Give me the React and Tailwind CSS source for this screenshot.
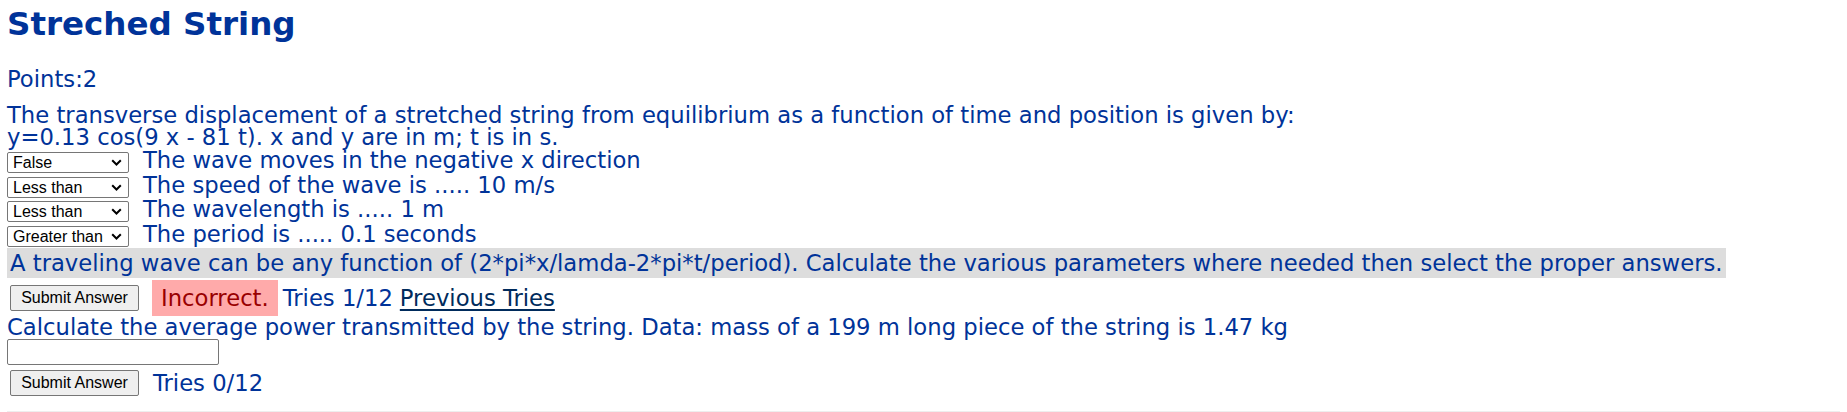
import React from 'react';

const Chevron = () => (
  <svg className="pointer-events-none absolute right-[7px] top-[7px]" width="11" height="7" viewBox="0 0 11 7">
    <path d="M1.2 1.2 L5.5 5.5 L9.8 1.2" fill="none" stroke="#000" strokeWidth="2" />
  </svg>
);

const Dropdown = ({ value, options }) => (
  <div className="relative mt-[4px] h-[21px] w-[122px] shrink-0">
    <select
      defaultValue={value}
      className="block h-full w-full appearance-none rounded-[2px] border border-[#767676] bg-white pl-[5px] font-['Liberation_Sans',sans-serif] text-[16px] leading-[19px] text-black"
    >
      {options.map((o) => (
        <option key={o}>{o}</option>
      ))}
    </select>
    <Chevron />
  </div>
);

const SubmitButton = () => (
  <button className="ml-[3px] block h-[26px] w-[129px] shrink-0 rounded-[2px] border border-[#767676] bg-[#efefef] font-['Liberation_Sans',sans-serif] text-[16px] leading-[24px] text-black">
    Submit Answer
  </button>
);

const rows = [
  { value: 'False', options: ['False', 'True'], text: 'The wave moves in the negative x direction' },
  { value: 'Less than', options: ['Less than', 'Equal to', 'Greater than'], text: 'The speed of the wave is ..... 10 m/s' },
  { value: 'Less than', options: ['Less than', 'Equal to', 'Greater than'], text: 'The wavelength is ..... 1 m' },
  { value: 'Greater than', options: ['Less than', 'Equal to', 'Greater than'], text: 'The period is ..... 0.1 seconds' },
];

export default function App() {
  return (
    <div className="min-h-[412px] bg-white px-[7px] font-['DejaVu_Sans',sans-serif] text-[22.7px] leading-[26px] text-[#003399]">
      <h1 className="pt-[5px] text-[32.5px] font-bold leading-[38px] text-[#003399]">Streched String</h1>

      <div className="mt-[23px] leading-[26px]">Points:2</div>

      <p className="mt-[12px] leading-[22px]">
        The transverse displacement of a stretched string from equilibrium as a function of time and position is given by:
        <br />
        y=0.13 cos(9 x - 81 t). x and y are in m; t is in s.
      </p>

      <div>
        {rows.map((r, i) => (
          <div key={i} className="flex h-[24.5px] items-start">
            <Dropdown value={r.value} options={r.options} />
            <span className="ml-[14px] whitespace-nowrap leading-[24.5px]">{r.text}</span>
          </div>
        ))}
      </div>

      <div className="mt-[2px] w-fit bg-[#dddddd] px-[3px] leading-[30px] whitespace-nowrap">
        A traveling wave can be any function of (2*pi*x/lamda-2*pi*t/period). Calculate the various parameters where needed then select the proper answers.
      </div>

      <div className="mt-[2px] flex h-[36px] items-center">
        <SubmitButton />
        <span className="ml-[13px] bg-[#ffaaaa] px-[9px] leading-[36px] text-[#990000]">Incorrect.</span>
        <span className="ml-[5px] leading-[36px]">Tries 1/12</span>
        <a href="#" className="ml-[7px] leading-[36px] text-[#002b5c] underline underline-offset-[3px]">
          Previous Tries
        </a>
      </div>

      <div className="leading-[23px]">
        Calculate the average power transmitted by the string. Data: mass of a 199 m long piece of the string is 1.47 kg
      </div>

      <input type="text" className="block h-[26px] w-[212px] rounded-[2px] border border-[#767676] bg-white" />

      <div className="mt-[5px] flex h-[26px] items-center">
        <SubmitButton />
        <span className="ml-[14px] leading-[26px]">Tries 0/12</span>
      </div>

      <hr className="mt-[15px] border-t-2 border-[#eeeeee]" />
    </div>
  );
}
